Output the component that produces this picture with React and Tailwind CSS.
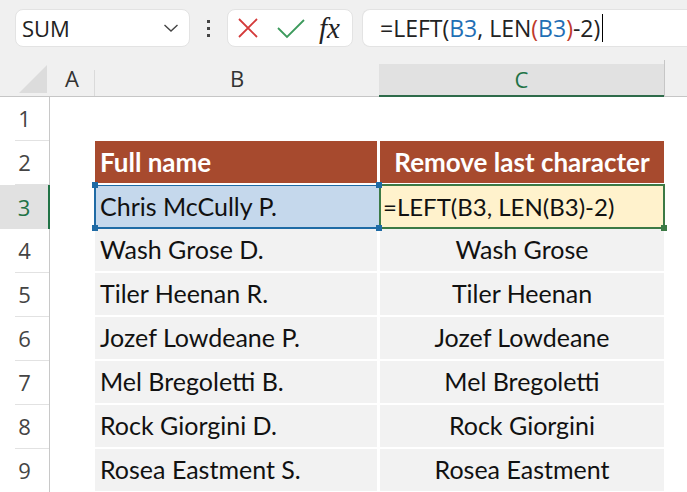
import React from "react";

const rows = [
  ["Chris McCully P.", "=LEFT(B3, LEN(B3)-2)"],
  ["Wash Grose D.", "Wash Grose"],
  ["Tiler Heenan R.", "Tiler Heenan"],
  ["Jozef Lowdeane P.", "Jozef Lowdeane"],
  ["Mel Bregoletti B.", "Mel Bregoletti"],
  ["Rock Giorgini D.", "Rock Giorgini"],
  ["Rosea Eastment S.", "Rosea Eastment"],
];

const uiFont = { fontFamily: '"Open Sans", "Noto Sans", sans-serif' };
const cellFont = { fontFamily: 'Lato, "Noto Sans", sans-serif' };

function Handle({ className }) {
  return <div className={`absolute w-[6px] h-[6px] ${className}`} />;
}

function RowNum({ n, active }) {
  return (
    <div
      className={
        active
          ? "w-[50px] h-[44px] flex items-center justify-center bg-[#e1e1e1] border-r-2 border-[#217346] text-[#217346] text-[22px]"
          : "w-[50px] h-[44px] flex flex-col border-r border-[#c8c8c8] text-[#444] text-[22px]"
      }
      style={uiFont}
    >
      {active ? (
        n
      ) : (
        <div className="ml-[15px] flex-1 flex items-center justify-center pr-[15px] border-b border-[#e2e2e2]">
          {n}
        </div>
      )}
    </div>
  );
}

export default function App() {
  return (
    <div className="w-[687px] h-[492px] overflow-hidden bg-white">
      {/* toolbar */}
      <div className="h-[60px] bg-[#f0f0f0] flex items-start pt-[9px] pl-[15px]" style={uiFont}>
        <div className="w-[175px] h-[38px] bg-white rounded-lg border border-[#e3e3e3] flex items-center justify-between pl-[6px] pr-[10px]">
          <span className="text-[22px] text-[#222]">SUM</span>
          <svg width="16" height="10" viewBox="0 0 16 10">
            <path d="M1.5 2 L8 8 L14.5 2" fill="none" stroke="#444" strokeWidth="1.4" />
          </svg>
        </div>
        <div className="w-[37px] h-[38px] flex flex-col items-center justify-center gap-[4px]">
          <div className="w-[3px] h-[3px] bg-[#444]" />
          <div className="w-[3px] h-[3px] bg-[#444]" />
          <div className="w-[3px] h-[3px] bg-[#444]" />
        </div>
        <div className="w-[126px] h-[38px] bg-white rounded-lg border border-[#e3e3e3] flex items-center pl-[9px]">
          <svg width="22" height="22" viewBox="0 0 22 22">
            <path d="M2 2 L20 20 M20 2 L2 20" stroke="#d43a3a" strokeWidth="1.8" />
          </svg>
          <svg width="28" height="22" viewBox="0 0 28 22" className="ml-[18px]">
            <path d="M1 11 L10 20 L27 3" fill="none" stroke="#3c9a5c" strokeWidth="1.8" />
          </svg>
          <span
            className="ml-[14px] text-[29px] italic text-[#222] leading-none"
            style={{ fontFamily: '"Liberation Serif", "DejaVu Serif", serif' }}
          >
            fx
          </span>
        </div>
        <div className="ml-[9px] flex-1 h-[38px] bg-white rounded-l-lg border border-r-0 border-[#e3e3e3] flex items-center pl-[17px] text-[23px] text-[#222]">
          <span>=LEFT(</span>
          <span className="text-[#1f6fb5]">B3</span>
          <span>, LEN</span>
          <span className="text-[#c0392b]">(</span>
          <span className="text-[#1f6fb5]">B3</span>
          <span className="text-[#c0392b]">)</span>
          <span>-2)</span>
          <span className="w-px h-[28px] bg-black ml-[2px]" />
        </div>
      </div>

      {/* column headers */}
      <div className="h-[37px] bg-[#f0f0f0] flex border-b border-[#c6c6c6] text-[22px] text-[#333]" style={uiFont}>
        <div className="w-[50px] flex items-end justify-end pb-[3px] pr-[3px]">
          <svg width="28" height="28" viewBox="0 0 28 28">
            <path d="M28 0 L28 28 L0 28 Z" fill="#dcdcdc" />
          </svg>
        </div>
        <div className="w-[45px] flex items-center justify-center border-r border-[#dadada] mt-[10px] pb-[10px]">
          A
        </div>
        <div className="w-[284px] flex items-center justify-center">B</div>
        <div className="w-[285px] mt-[4px] bg-[#e1e1e1] border-b-2 border-[#2e6b4a] flex items-center justify-center text-[#217346] -mb-px">
          C
        </div>
        <div className="flex-1 border-l border-[#c6c6c6]" />
      </div>

      {/* body */}
      <div className="flex flex-col">
        <div className="flex">
          <RowNum n={1} />
        </div>
        <div className="flex">
          <RowNum n={2} />
          <div className="w-[45px]" />
          <div
            className="w-[282px] h-[42px] bg-[#a74a2e] text-white font-bold text-[26px] flex items-center pl-[5px]"
            style={cellFont}
          >
            Full name
          </div>
          <div className="w-[3px]" />
          <div
            className="w-[284px] h-[42px] bg-[#a74a2e] text-white font-bold text-[26px] flex items-center justify-center"
            style={cellFont}
          >
            Remove last character
          </div>
        </div>
        {rows.map((r, i) => {
          const active = i === 0;
          return (
            <div className="flex" key={i}>
              <RowNum n={i + 3} active={active} />
              <div className="w-[45px]" />
              {active ? (
                <>
                  <div
                    className="relative w-[285px] h-[44px] -ml-px bg-[#c5d8ec] border-t border-b-2 border-l-2 border-[#1f6ba5] text-[25px] text-[#111] flex items-center pl-[4px]"
                    style={cellFont}
                  >
                    {r[0]}
                    <Handle className="-left-[4px] -top-[4px] bg-[#1f6ba5]" />
                    <Handle className="-left-[4px] -bottom-[4px] bg-[#1f6ba5]" />
                    <Handle className="-right-[3px] -top-[4px] bg-[#1f6ba5] z-10" />
                    <Handle className="-right-[3px] -bottom-[4px] bg-[#1f6ba5] z-10" />
                  </div>
                  <div
                    className="relative w-[286px] h-[45px] -mt-px bg-[#fff2cc] border-2 border-[#3c7a45] text-[24px] text-[#111] flex items-center pl-[2px]"
                    style={cellFont}
                  >
                    {r[1]}
                    <Handle className="-right-[4px] -bottom-[4px] bg-[#3c7a45]" />
                  </div>
                </>
              ) : (
                <>
                  <div
                    className="w-[282px] h-[42px] bg-[#f2f2f2] text-[25px] text-[#111] flex items-center pl-[5px]"
                    style={cellFont}
                  >
                    {r[0]}
                  </div>
                  <div className="w-[3px]" />
                  <div
                    className="w-[284px] h-[42px] bg-[#f2f2f2] text-[25px] text-[#111] flex items-center justify-center"
                    style={cellFont}
                  >
                    {r[1]}
                  </div>
                </>
              )}
            </div>
          );
        })}
      </div>
    </div>
  );
}
